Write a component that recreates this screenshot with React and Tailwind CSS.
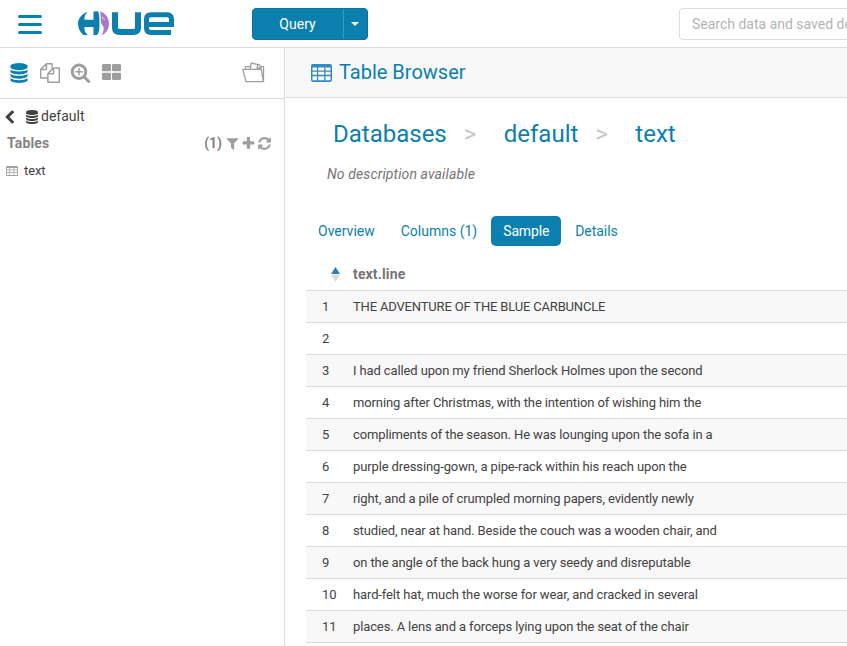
import clsx from 'clsx';

const ICONS = {
  database: 'M896 768q237 0 443-43t325-127v170q0 69-103 128t-280 93.500-385 34.500-385-34.500-280-93.500-103-128v-170q119 84 325 127t443 43zm0 768q237 0 443-43t325-127v170q0 69-103 128t-280 93.500-385 34.500-385-34.500-280-93.500-103-128v-170q119 84 325 127t443 43zm0-384q237 0 443-43t325-127v170q0 69-103 128t-280 93.500-385 34.500-385-34.500-280-93.500-103-128v-170q119 84 325 127t443 43zm0-1152q208 0 385 34.500t280 93.500 103 128v128q0 69-103 128t-280 93.500-385 34.500-385-34.500-280-93.500-103-128v-128q0-69 103-128t280-93.500 385-34.500z',
  files: 'M1696 384q40 0 68 28t28 68v1216q0 40-28 68t-68 28h-960q-40 0-68-28t-28-68v-288h-544q-40 0-68-28t-28-68v-672q0-40 20-88t48-76l408-408q28-28 76-48t88-20h416q40 0 68 28t28 68v328q68-40 128-40h416zm-544 213l-299 299h299v-299zm-640-384l-299 299h299v-299zm196 647l316-316v-416h-384v416q0 40-28 68t-68 28h-416v640h512v-256q0-40 20-88t48-76zm956 804v-1152h-384v416q0 40-28 68t-68 28h-416v640h896z',
  searchPlus: 'M1088 800v64q0 13-9.500 22.500t-22.500 9.500h-224v224q0 13-9.500 22.500t-22.500 9.500h-64q-13 0-22.500-9.500t-9.500-22.500v-224h-224q-13 0-22.500-9.500t-9.500-22.500v-64q0-13 9.500-22.500t22.500-9.500h224v-224q0-13 9.500-22.500t22.500-9.500h64q13 0 22.500 9.500t9.500 22.500v224h224q13 0 22.500 9.500t9.500 22.500zm128 32q0-185-131.500-316.500t-316.500-131.500-316.500 131.500-131.500 316.500 131.500 316.500 316.500 131.500 316.500-131.500 131.500-316.500zm512 832q0 53-37.500 90.500t-90.500 37.500q-54 0-90-38l-343-342q-179 124-399 124-143 0-273.500-55.500t-225-150-150-225-55.500-273.500 55.500-273.500 150-225 225-150 273.500-55.500 273.500 55.500 225 150 150 225 55.500 273.500q0 220-124 399l343 343q37 37 37 90z',
  filter: 'M1595 295q17 41-14 70l-493 493v742q0 42-39 59-13 5-25 5-27 0-45-19l-256-256q-19-19-19-45v-486l-493-493q-31-29-14-70 17-39 59-39h1280q42 0 59 39z',
  plus: 'M1600 736v192q0 40-28 68t-68 28h-416v416q0 40-28 68t-68 28h-192q-40 0-68-28t-28-68v-416h-416q-40 0-68-28t-28-68v-192q0-40 28-68t68-28h416v-416q0-40 28-68t68-28h192q40 0 68 28t28 68v416h416q40 0 68 28t28 68z',
  refresh: 'M1639 1056q0 5-1 7-64 268-268 434.500t-478 166.500q-146 0-282.500-55t-243.500-157l-129 129q-19 19-45 19t-45-19-19-45v-448q0-26 19-45t45-19h448q26 0 45 19t19 45-19 45l-137 137q71 66 161 102t187 36q134 0 250-65t186-179q11-17 53-117 8-23 30-23h192q13 0 22.500 9.500t9.500 22.500zm25-800v448q0 26-19 45t-45 19h-448q-26 0-45-19t-19-45 19-45l138-138q-148-137-349-137-134 0-250 65t-186 179q-11 17-53 117-8 23-30 23h-199q-13 0-22.500-9.500t-9.500-22.500v-7q65-268 270-434.500t480-166.500q146 0 284 55.500t245 156.500l130-129q19-19 45-19t45 19 19 45z',
  chevronLeft: 'M1427 301l-531 531 531 531q19 19 19 45t-19 45l-166 166q-19 19-45 19t-45-19l-742-742q-19-19-19-45t19-45l742-742q19-19 45-19t45 19l166 166q19 19 19 45t-19 45z',
};

const LINES = [
  'THE ADVENTURE OF THE BLUE CARBUNCLE',
  '',
  'I had called upon my friend Sherlock Holmes upon the second',
  'morning after Christmas, with the intention of wishing him the',
  'compliments of the season. He was lounging upon the sofa in a',
  'purple dressing-gown, a pipe-rack within his reach upon the',
  'right, and a pile of crumpled morning papers, evidently newly',
  'studied, near at hand. Beside the couch was a wooden chair, and',
  'on the angle of the back hung a very seedy and disreputable',
  'hard-felt hat, much the worse for wear, and cracked in several',
  'places. A lens and a forceps lying upon the seat of the chair',
];

const TABS = ['Overview', 'Columns (1)', 'Sample', 'Details'];

function Icon({ name, className }) {
  return (
    <svg viewBox="0 0 1792 1792" fill="currentColor" className={clsx('shrink-0', className)}>
      <path d={ICONS[name]} />
    </svg>
  );
}

function TableIcon({ className }) {
  return (
    <svg viewBox="0 0 21 18" preserveAspectRatio="none" fill="currentColor" className={clsx('shrink-0', className)}>
      <path
        fillRule="evenodd"
        d="M2 0h17a2 2 0 0 1 2 2v14a2 2 0 0 1-2 2H2a2 2 0 0 1-2-2V2a2 2 0 0 1 2-2zM1.500 3.500v3h4.500v-3zM7.200 3.500v3h6v-3zM14.500 3.500v3h5v-3zM1.500 7.800v3h4.500v-3zM7.200 7.800v3h6v-3zM14.500 7.800v3h5v-3zM1.500 12.200v4h4.500v-4zM7.200 12.200v4h6v-4zM14.500 12.200v4h5v-4z"
      />
    </svg>
  );
}

function Logo() {
  return (
    <svg viewBox="0 0 96 25" className="w-24 h-[25px] ml-9 shrink-0">
      {/* globe */}
      <path fill="#0b7fad" d="M9.500 1C3.500 3 0 7.500 0 12.800c0 4.500 2 8.700 5.500 11.200H9.500C7 21.500 6 19 6.500 16h9v8H19c2-2 2.500-5 2.500-11.500S21 2.500 20 .3L15.500.5V8.800h-9C6 6 7 3.500 9.500 1z" />
      <path fill="#a77bca" d="M22.300.6C27.500 2.300 31 7 31 12.500S28.300 22.300 23.800 24.200C25.500 21 26.200 17.500 25.300 15.500c-.8-1.500-2-2-2.300-4z" />
      <path fill="#fff" d="M24 6h1.200v1.200H24zM25.500 8h1v1h-1z" />
      {/* wordmark */}
      <g fill="none" stroke="#0b7fad" strokeWidth="6">
        <path d="M37 1.300V16.500Q37 21 41.500 21H55.500Q60 21 60 16.500V1.300" />
        <path strokeWidth="5" d="M69 13.500H93.500V8Q93.500 3.800 89.500 3.800H73Q68.500 3.800 68.500 8V17Q68.500 21.500 73 21.500H93" />
      </g>
    </svg>
  );
}

function TopBar() {
  return (
    <header className="flex items-center h-12 border-b border-[#dcdcdc] pl-[18px] shrink-0">
      <div className="flex flex-col gap-[5px] w-6 mt-[2px] shrink-0">
        <span className="h-[3px] rounded-full bg-[#0b7fad]" />
        <span className="h-[3px] rounded-full bg-[#0b7fad]" />
        <span className="h-[3px] rounded-full bg-[#0b7fad]" />
      </div>
      <Logo />
      <div className="flex ml-[78px] h-8 w-[116px] rounded-[4px] border border-[#0a739d] bg-[#0b7fad] text-white shrink-0">
        <button className="w-[91px] pr-px text-sm border-r border-[#3c99bd]">Query</button>
        <button className="flex flex-1 items-center justify-center pr-[2px]">
          <svg viewBox="0 0 8 4" className="w-2 h-1"><path fill="#fff" d="M0 0h8L4 4z" /></svg>
        </button>
      </div>
      <div className="flex items-center ml-[311px] w-80 h-8 shrink-0 rounded-[4px] border border-[#dcdcdc] pl-3 text-sm text-[#b4b4b4] whitespace-nowrap">
        Search data and saved documents...
      </div>
    </header>
  );
}

function Sidebar() {
  return (
    <aside className="w-[285px] shrink-0 border-r border-[#dcdcdc]">
      <div className="flex items-center h-[51px] border-b border-[#dcdcdc] pl-[9px] pr-5 text-[#9e9e9e]">
        <Icon name="database" className="w-5 h-5 text-[#0b7fad]" />
        <Icon name="files" className="w-5 h-5 ml-[11px]" />
        <Icon name="searchPlus" className="w-[21px] h-[21px] ml-[10px] -mt-px" />
        <svg viewBox="0 0 19 16" fill="currentColor" className="w-[19px] h-4 ml-[11px] -mt-[3px]">
          <rect width="9" height="7.200" rx="1.300" />
          <rect x="10" width="9" height="7.200" rx="1.300" />
          <rect y="8.800" width="9" height="7.200" rx="1.300" />
          <rect x="10" y="8.800" width="9" height="7.200" rx="1.300" />
        </svg>
        <svg viewBox="0 0 23 21" fill="none" stroke="currentColor" strokeWidth="1.300" strokeLinejoin="round" className="w-[23px] h-[21px] ml-auto -mr-px -mt-[2px]">
          <path d="M.8 7.300h18.400L21.500 19.600H4zM3.500 7V4.700h4.800M8.300 7L9.200 1l8.300 2L19.500 6.500M15.800 2.800L15 6h4M18.500 4.700h3v14.500" />
        </svg>
      </div>
      <div className="flex items-center h-[35px] pl-[2px] text-sm text-[#424242]">
        <Icon name="chevronLeft" className="w-[15px] h-[15px] mt-px" />
        <Icon name="database" className="w-[14px] h-[14px] ml-2 mr-[2px] mt-px" />
        <span className="-mt-px">default</span>
      </div>
      <div className="flex items-center h-[18px] pl-[7px] pr-[13px] text-sm font-bold text-[#838383]">
        <span className="tracking-[0.15px]">Tables</span>
        <span className="ml-auto mr-[3px]">(1)</span>
        <Icon name="filter" className="w-[15px] h-[15px] text-[#9e9e9e]" />
        <Icon name="plus" className="w-[15px] h-[15px] ml-px text-[#9e9e9e]" />
        <Icon name="refresh" className="w-[15px] h-[15px] ml-px -mr-px text-[#9e9e9e]" />
      </div>
      <div className="flex items-center h-[37px] pl-[6px] text-[13px] text-[#424242]">
        <TableIcon className="w-3 h-[10px] mr-[6px] text-[#a0a0a0]" />
        <span className="tracking-[-0.12px]">text</span>
      </div>
    </aside>
  );
}

function SampleTable() {
  return (
    <div className="ml-5 text-[13px] text-[#424242]">
      <div className="flex items-center h-[33px] border-b border-[#dcdcdc] pl-[25px] text-sm font-bold tracking-[0.15px] text-[#757575]">
        <svg viewBox="0 0 9 15" className="w-[9px] h-[15px] mr-[13px]">
          <path fill="#2980b9" d="M0 7l4.500-7L9 7z" />
          <path fill="#dcdcdc" d="M0 8h9l-4.500 7z" />
        </svg>
        text.line
      </div>
      {LINES.map((line, i) => (
        <div
          key={i}
          className={clsx('flex items-center h-8 border-b border-[#dcdcdc] whitespace-nowrap', i % 2 === 0 && 'bg-[#f8f8f8]')}
        >
          <span className="w-[47px] pl-4 shrink-0">{i + 1}</span>
          <span className={i === 0 ? 'tracking-[-0.17px]' : 'tracking-[-0.12px]'}>{line}</span>
        </div>
      ))}
    </div>
  );
}

export default function App() {
  return (
    <div className="flex flex-col w-full h-screen overflow-hidden bg-white font-['Roboto',sans-serif]">
      <TopBar />
      <div className="flex flex-1 min-h-0">
        <Sidebar />
        <main className="flex-1 min-w-0 ml-px">
          <div className="flex items-center h-[50px] bg-[#f8f8f8] border-b border-[#dcdcdc] pl-[25px] text-xl text-[#0b7fad]">
            <TableIcon className="w-[21px] h-[18px] mr-[7px] text-[#338bc0]" />
            <span className="-mt-[2px]">Table Browser</span>
          </div>
          <nav className="flex items-center h-8 mt-5 pl-[47px] text-2xl text-[#0b7fad]">
            <span>Databases</span>
            <span className="w-[57px] pl-[17px] text-[#c8c8c8]">&gt;</span>
            <span>default</span>
            <span className="w-[57px] pl-[17px] text-[#c8c8c8]">&gt;</span>
            <span>text</span>
          </nav>
          <p className="mt-[14px] pl-[41px] text-sm italic tracking-[0.12px] text-[#757575]">No description available</p>
          <div className="flex mt-8 mb-3 pl-5 gap-[2px] text-sm text-[#0b7fad]">
            {TABS.map((tab) => (
              <button
                key={tab}
                className={clsx('h-[30px] px-3 rounded-[5px]', tab === 'Sample' && 'bg-[#0b7fad] text-white tracking-[-0.15px]', tab === 'Details' && 'tracking-[-0.05px]')}
              >
                {tab}
              </button>
            ))}
          </div>
          <SampleTable />
        </main>
      </div>
    </div>
  );
}
